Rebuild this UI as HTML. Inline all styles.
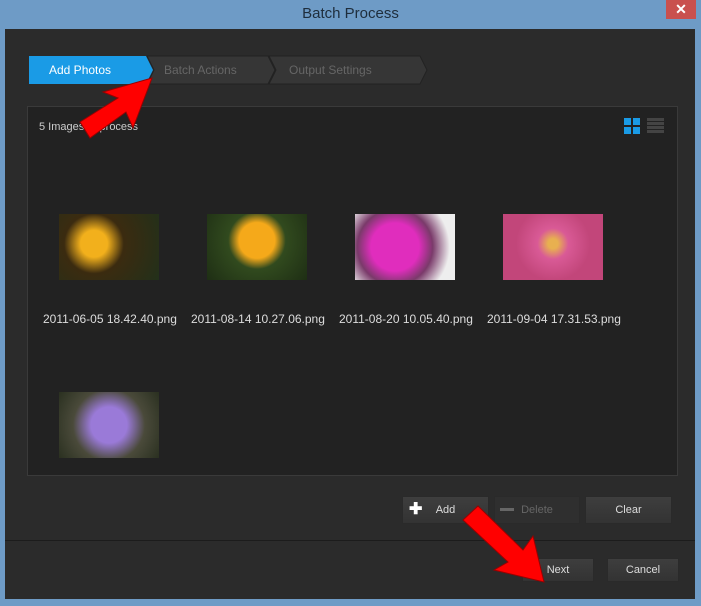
<!DOCTYPE html><html><head><style>
body{margin:0;width:701px;height:606px;background:#6e9bc6;position:relative;overflow:hidden;font-family:"Liberation Sans",sans-serif}
.a{position:absolute}
.btn{position:absolute;background:linear-gradient(#3e3e3e,#333);border:1px solid #2a2a2a;color:#ddd;font-size:11px;text-align:center;box-sizing:border-box}
.th{position:absolute;width:100px;height:66px}
.cap{position:absolute;color:#ddd;font-size:12px}
</style></head><body>
<div class="a" style="left:0;top:0;width:701px;height:29px;text-align:center;line-height:28px;font-size:15px;color:#1e2d3c">Batch Process</div>
<div class="a" style="left:666px;top:0;width:30px;height:19px;background:#c9504e;color:#fff;text-align:center;font-size:14px;line-height:18px;font-weight:bold">✕</div>
<div class="a" style="left:5px;top:29px;width:690px;height:570px;background:#2b2b2b"></div>
<svg class="a" style="left:0;top:0" width="701" height="606">
<polygon points="29,56 146,56 153,70 146,84 29,84" fill="#1a9be6"/>
<polygon points="147,56 268,56 275,70 268,84 147,84 154,70" fill="#363636" stroke="#222"/>
<polygon points="269,56 420,56 427,70 420,84 269,84 276,70" fill="#363636" stroke="#222"/>
<text x="49" y="74" fill="#fff" font-size="12" font-family="Liberation Sans">Add Photos</text>
<text x="164" y="74" fill="#666" font-size="12" font-family="Liberation Sans">Batch Actions</text>
<text x="289" y="74" fill="#666" font-size="12" font-family="Liberation Sans">Output Settings</text>
</svg>
<div class="a" style="left:27px;top:106px;width:649px;height:368px;background:#222;border:1px solid #3a3a3a"></div>
<div class="a" style="left:39px;top:121px;color:#ccc;font-size:11px">5 Images to process</div>
<div class="a" style="left:624px;top:118px;width:16px;height:16px;background:linear-gradient(90deg,#1a9be6 7px,#222 7px,#222 9px,#1a9be6 9px)"><div style="position:absolute;top:7px;left:0;width:16px;height:2px;background:#222"></div></div>
<div class="a" style="left:647px;top:118px;width:17px;height:16px;background:repeating-linear-gradient(#444 0 3px,#222 3px 4px)"></div>
<div class="th" style="left:59px;top:214px;background:radial-gradient(circle at 35% 45%,#f2b01c 18%,#3b2b10 40%,#22301a)"></div>
<div class="th" style="left:207px;top:214px;background:radial-gradient(circle at 50% 40%,#f5a91a 28%,#314a1e 45%,#1e2e14)"></div>
<div class="th" style="left:355px;top:214px;background:radial-gradient(circle at 40% 50%,#e02dbd 35%,#7a3a6a 55%,#eee 80%)"></div>
<div class="th" style="left:503px;top:214px;background:radial-gradient(circle at 50% 45%,#e8b050 8%,#d95a96 25%,#c2467a 60%)"></div>
<div class="th" style="left:59px;top:392px;background:radial-gradient(circle at 50% 50%,#9a7ad8 30%,#4a4a3a 60%,#2a3020)"></div>
<div class="cap" style="left:43px;top:312px">2011-06-05 18.42.40.png</div>
<div class="cap" style="left:191px;top:312px">2011-08-14 10.27.06.png</div>
<div class="cap" style="left:339px;top:312px">2011-08-20 10.05.40.png</div>
<div class="cap" style="left:487px;top:312px">2011-09-04 17.31.53.png</div>
<div class="btn" style="left:402px;top:496px;width:87px;height:28px;line-height:26px">Add</div>
<div class="a" style="left:409px;top:504px;color:#fff;font-size:16px;font-weight:bold;line-height:12px">✚</div>
<div class="btn" style="left:494px;top:496px;width:86px;height:28px;line-height:26px;color:#666;background:#2f2f2f">Delete</div>
<div class="a" style="left:500px;top:508px;width:14px;height:3px;background:#666"></div>
<div class="btn" style="left:585px;top:496px;width:87px;height:28px;line-height:26px">Clear</div>
<div class="a" style="left:5px;top:540px;width:690px;height:1px;background:#1c1c1c"></div>
<div class="btn" style="left:522px;top:558px;width:72px;height:24px;line-height:22px">Next</div>
<div class="btn" style="left:607px;top:558px;width:72px;height:24px;line-height:22px">Cancel</div>
<svg class="a" style="left:0;top:0" width="701" height="606">
<polygon points="152,78 103,92 118,98 80,122 90,138 126,112 133,128" fill="#f00" stroke="#900" stroke-width="1"/>
<polygon points="544,582 533,536 523,550 478,506 463,520 508,562 494,570" fill="#f00" stroke="#900" stroke-width="1"/>
</svg>
</body></html>
